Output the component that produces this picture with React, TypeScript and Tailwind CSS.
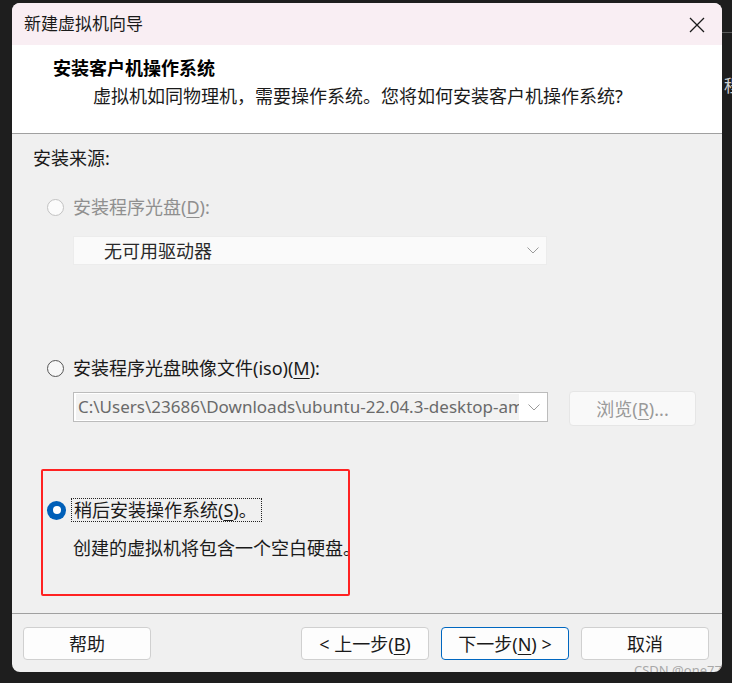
export default function App() {
  return (
    <div className="relative w-[732px] h-[683px] overflow-hidden bg-[#1e1e1e] pt-[3px] pl-[12px] font-['Noto_Sans','Noto_Sans_CJK_SC',sans-serif] text-[#1a1a1a]">
      {/* background window edge on the right */}
      <div className="absolute left-[724px] top-[74px] text-[17px] leading-[24px] text-[#cfcfcf] whitespace-nowrap">程</div>
      <div className="absolute left-[722px] top-[32px] w-[10px] h-[1px] bg-[#5a5a5a]" />

      <div className="relative w-[710px] h-[669px] rounded-[8px] overflow-hidden bg-[#f0f0f0] flex flex-col">
        {/* title bar */}
        <div className="h-[42px] bg-[#f9eef3] flex items-center justify-between pl-[12px] pr-[17px] shrink-0">
          <span className="text-[17px] leading-[24px] text-[#1a1a1a]">新建虚拟机向导</span>
          <svg width="16" height="16" viewBox="0 0 16 16" className="mt-[1px]">
            <path d="M1 1 L15 15 M15 1 L1 15" stroke="#1a1a1a" strokeWidth="1.3" fill="none" />
          </svg>
        </div>

        {/* header */}
        <div className="h-[89px] bg-white border-b border-[#a0a0a0] shrink-0 pt-[11px]">
          <div className="pl-[41px] text-[18px] leading-[24px] font-bold text-black">安装客户机操作系统</div>
          <div className="pl-[81px] mt-[4px] text-[18px] leading-[24px] text-[#1a1a1a]">
            虚拟机如同物理机，需要操作系统。您将如何安装客户机操作系统?
          </div>
        </div>

        {/* body */}
        <div className="relative flex-1 pt-[12px] pl-[21px]">
          <div className="text-[18px] leading-[24px]">安装来源:</div>

          <div className="mt-[25px] ml-[14px] flex items-center h-[24px] gap-[9px]">
            <span className="w-[17px] h-[17px] rounded-full border border-[#c2c2c2] bg-[#fbfbfb]" />
            <span className="text-[18px] leading-[24px] text-[#8f8f8f]">
              安装程序光盘(<span className="underline underline-offset-[3px]">D</span>):
            </span>
          </div>

          <div className="mt-[17px] ml-[40px] w-[474px] h-[29px] bg-[#fafafa] border border-[#ececec] flex items-center justify-between pl-[30px] pr-[7px]">
            <span className="text-[18px] leading-[24px] text-[#2a2a2a]">无可用驱动器</span>
            <svg width="12" height="7" viewBox="0 0 12 7">
              <path d="M0.5 0.5 L6 6 L11.5 0.5" stroke="#9a9a9a" strokeWidth="1" fill="none" />
            </svg>
          </div>

          <div className="mt-[91px] ml-[14px] flex items-center h-[24px] gap-[9px]">
            <span className="w-[17px] h-[17px] rounded-full border border-[#555555] bg-[#f7f7f7]" />
            <span className="text-[18px] leading-[24px] text-[#1a1a1a]">
              安装程序光盘映像文件(iso)(<span className="underline underline-offset-[3px]">M</span>):
            </span>
          </div>

          <div className="mt-[11px] ml-[40px] flex items-start gap-[21px]">
            <div className="mt-[1px] w-[475px] h-[30px] bg-white border border-[#bcbcbc] flex items-center pr-[7px]">
              <div className="w-[443px] h-[26px] ml-[2px] bg-[#f2f2f2] overflow-hidden whitespace-nowrap text-[17px] leading-[26px] text-[#6a6a6a] pl-[2px]">
                C:\Users\23686\Downloads\ubuntu-22.04.3-desktop-amd64.iso
              </div>
              <div className="flex-1 flex justify-end">
                <svg width="12" height="7" viewBox="0 0 12 7">
                  <path d="M0.5 0.5 L6 6 L11.5 0.5" stroke="#9a9a9a" strokeWidth="1" fill="none" />
                </svg>
              </div>
            </div>
            <div className="w-[127px] h-[35px] rounded-[4px] bg-[#f9f9f9] border border-[#e6e6e6] flex items-center justify-center text-[18px] leading-[24px] text-[#9a9a9a]">
              浏览(<span className="underline underline-offset-[3px]">R</span>)...
            </div>
          </div>

          <div className="mt-[72px] ml-[14px] flex items-center h-[24px] gap-[5px]">
            <span className="w-[19px] h-[19px] rounded-full bg-[#005fb8] flex items-center justify-center">
              <span className="w-[8px] h-[8px] rounded-full bg-white" />
            </span>
            <span className="h-[24px] border border-dotted border-[#222] pl-[2px] pr-[4px] text-[18px] leading-[22px] text-[#1a1a1a]">
              稍后安装操作系统(<span className="underline underline-offset-[3px]">S</span>)。
            </span>
          </div>

          <div className="mt-[14px] ml-[40px] text-[18px] leading-[24px] text-[#1a1a1a]">创建的虚拟机将包含一个空白硬盘。</div>

          {/* annotation frame */}
          <div className="absolute left-[29px] top-[335px] w-[309px] h-[127px] border-2 border-[#ff2222] rounded-[2px]" />
        </div>

        {/* footer */}
        <div className="h-[59px] border-t border-[#a0a0a0] shrink-0 flex items-start justify-between pt-[13px] pl-[11px] pr-[13px]">
          <button className="w-[128px] h-[33px] rounded-[4px] bg-[#fdfdfd] border border-[#d0d0d0] text-[18px] leading-[24px] text-[#1a1a1a]">帮助</button>
          <div className="flex gap-[12px]">
            <button className="w-[128px] h-[33px] rounded-[4px] bg-[#fdfdfd] border border-[#d0d0d0] text-[18px] leading-[24px] text-[#1a1a1a]">
              &lt; 上一步(<span className="underline underline-offset-[3px]">B</span>)
            </button>
            <button className="w-[128px] h-[33px] rounded-[4px] bg-[#fdfdfd] border border-[#0067c0] text-[18px] leading-[24px] text-[#1a1a1a]">
              下一步(<span className="underline underline-offset-[3px]">N</span>) &gt;
            </button>
            <button className="w-[128px] h-[33px] rounded-[4px] bg-[#fdfdfd] border border-[#d0d0d0] text-[18px] leading-[24px] text-[#1a1a1a]">取消</button>
          </div>
        </div>

        <div className="absolute left-[622px] top-[659px] text-[13px] leading-[16px] text-[#a8a8a8] whitespace-nowrap">CSDN @one77-ok</div>
      </div>
    </div>
  );
}
